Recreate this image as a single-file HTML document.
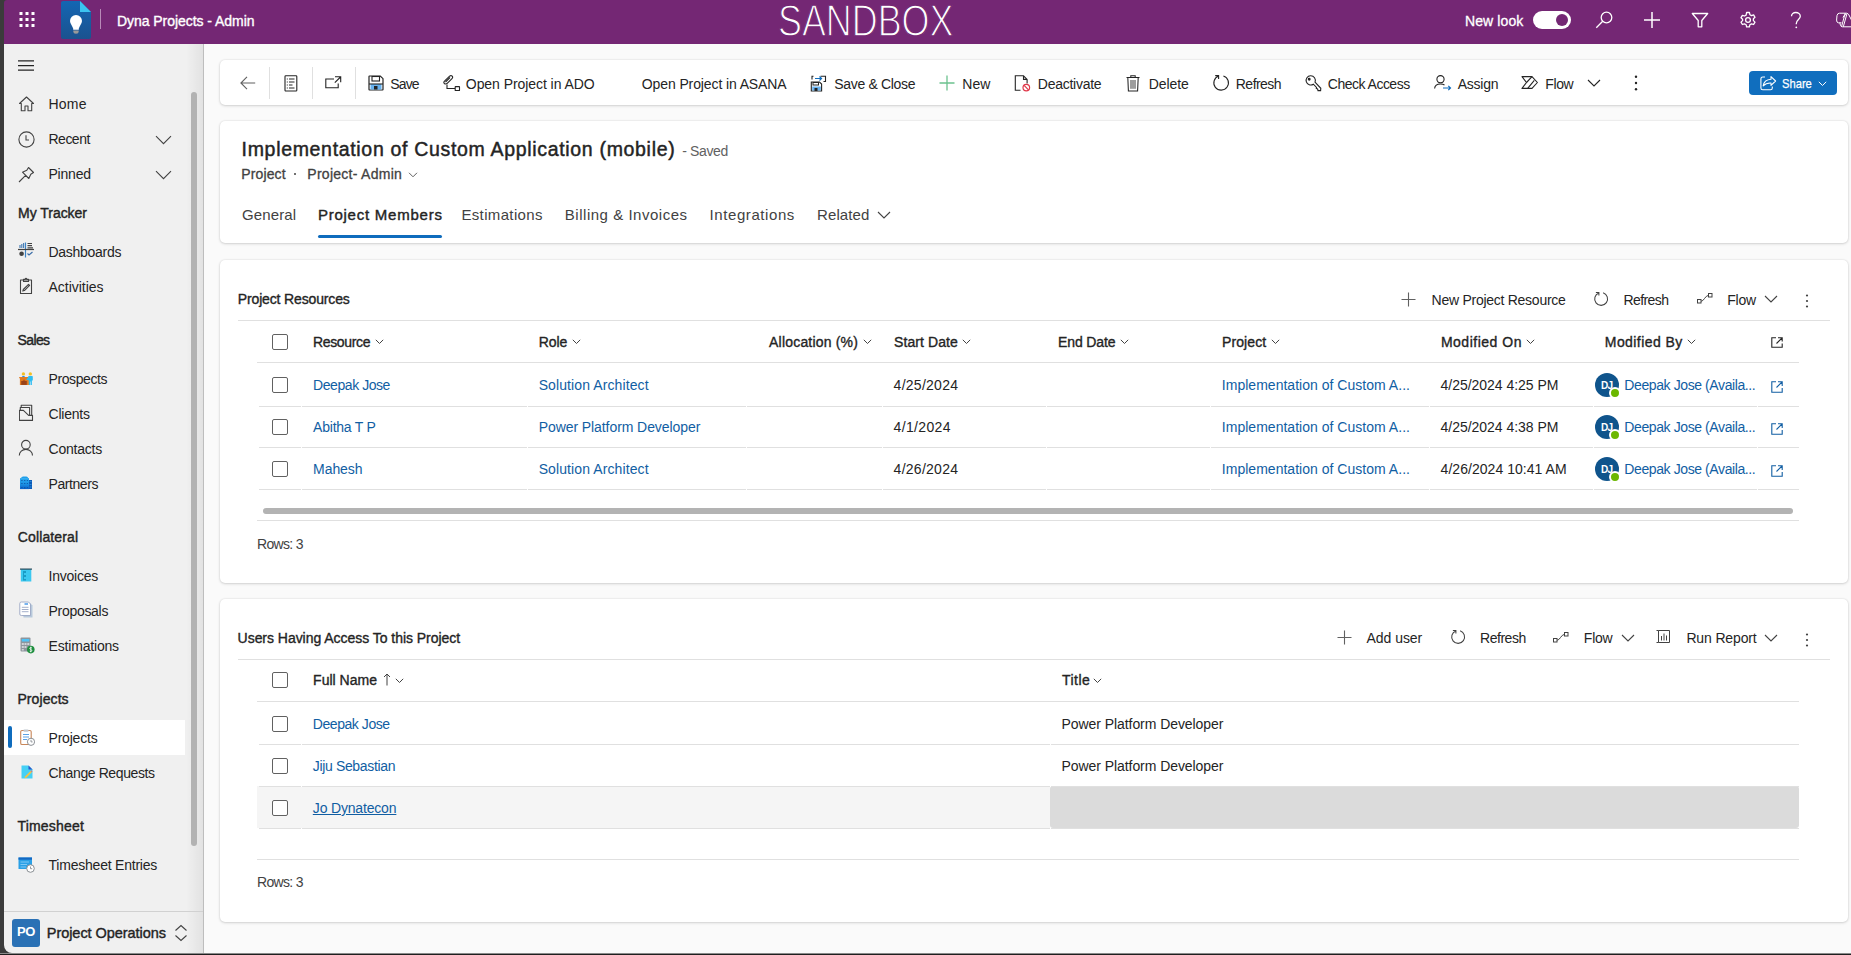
<!DOCTYPE html>
<html><head><meta charset="utf-8">
<style>
*{box-sizing:border-box;margin:0;padding:0}
html,body{width:1851px;height:955px;overflow:hidden}
body{position:relative;background:#fafafa;font-family:"Liberation Sans",sans-serif;color:#242424;font-size:14px}
.a{position:absolute;white-space:nowrap}
#frameL{left:0;top:0;width:4px;height:955px;background:#3b3b3b}
#frameB{left:0;top:953px;width:1851px;height:2px;background:linear-gradient(#8a8a8a 0,#8a8a8a 1px,#1f1f1f 1px)}
#topbar{left:4px;top:0;width:1847px;height:44px;background:#742774;border-top-left-radius:3px}
#nav{left:4px;top:44px;width:200px;height:909px;background:#f0f0f0;border-right:1px solid #bdbdbd;border-bottom-left-radius:8px}
.nv{font-size:14px;line-height:20px;color:#242424;letter-spacing:-0.15px}
.card{position:absolute;background:#fff;border-radius:5px;box-shadow:0 0 2px rgba(0,0,0,.12),0 1px 3px rgba(0,0,0,.14)}
</style></head><body>
<div id="frameL" class="a"></div>
<div class="a" style="left:0;top:0;width:12px;height:12px;background:#3b3b3b"></div>
<div id="topbar" class="a"></div>
<div class="a" style="left:0;top:930px;width:30px;height:25px;background:#3b3b3b"></div>
<div id="nav" class="a"></div>
<div class="a" style="left:186px;top:44px;width:17px;height:909px;background:linear-gradient(90deg,rgba(0,0,0,0),rgba(0,0,0,0.06))"></div>
<div id="frameB" class="a"></div>

<!-- SIDEBAR -->
<svg class="a" style="left:16px;top:56px" width="20" height="20" viewBox="0 0 20 20" stroke="#242424" stroke-width="1.1"><path d="M2 4.9H18M2 9.6H18M2 14.1H18"/></svg>
<div class="a" style="left:4px;top:720px;width:181px;height:35px;background:#fff"></div>
<div class="a" style="left:8px;top:726px;width:4px;height:22px;border-radius:2px;background:#0f6cbd"></div>
<div class="a" style="left:191px;top:92px;width:6px;height:754px;border-radius:3px;background:#b2b2b2"></div>
<div class="a" style="left:4px;top:911px;width:199px;height:1px;background:#d1d1d1"></div>
<div class="a" style="left:12px;top:919px;width:28px;height:28px;border-radius:3px;background:#2a71b5;color:#fff;font-size:13px;font-weight:bold;line-height:25px;text-align:center;letter-spacing:-0.3px">PO</div>
<svg class="a" style="left:173px;top:924px" width="16" height="18" viewBox="0 0 16 18" fill="none" stroke="#424242" stroke-width="1.1"><path d="M2.5 6.5L8 1.5 13.5 6.5M2.5 11.5L8 16.5 13.5 11.5"/></svg>

<!-- SIDEICONS -->
<svg class="a" style="left:18px;top:96px" width="17" height="16" viewBox="0 0 17 16" fill="none" stroke="#424242" stroke-width="1.1" stroke-linejoin="round"><path d="M8.5 1L1.5 7.5H3.3V14.8H7V10H10V14.8H13.7V7.5H15.5Z"/></svg>
<svg class="a" style="left:18px;top:131px" width="17" height="17" viewBox="0 0 17 17" fill="none" stroke="#424242" stroke-width="1.1"><circle cx="8.5" cy="8.5" r="7.6"/><path d="M8 4.3V9H11"/></svg>
<svg class="a" style="left:18px;top:166px" width="17" height="17" viewBox="0 0 17 17" fill="none" stroke="#424242" stroke-width="1.1" stroke-linejoin="round"><path d="M10.5 1.5L15.5 6.5 12.8 8.2 10.8 12.5 4.5 6.2 8.8 4.2Z M7.6 9.4L1 16"/></svg>
<svg class="a" style="left:155px;top:135px" width="17" height="10" viewBox="0 0 17 10" fill="none" stroke="#424242" stroke-width="1.1"><path d="M1 1.2L8.5 8.7 16 1.2"/></svg>
<svg class="a" style="left:155px;top:170px" width="17" height="10" viewBox="0 0 17 10" fill="none" stroke="#424242" stroke-width="1.1"><path d="M1 1.2L8.5 8.7 16 1.2"/></svg>
<svg class="a" style="left:18px;top:242px" width="16" height="16" viewBox="0 0 16 16" fill="none" stroke-width="1.2">
<path d="M7.5 0.5V15.5" stroke="#3d84c6"/><path d="M0 7.5H16" stroke="#424242"/>
<path d="M2 6V3M3.8 6V2M5.6 6V1" stroke="#4a7fb5"/><path d="M9.5 1.5H14M9.5 3.7H14M9.5 5.8H15" stroke="#424242"/>
<path d="M9.5 11.5L11 13 14.5 10" stroke="#3d6fa8"/><circle cx="3.6" cy="11.8" r="2.3" fill="#424242" stroke="none"/></svg>
<svg class="a" style="left:19px;top:277px" width="14" height="18" viewBox="0 0 14 18" fill="none" stroke="#424242" stroke-width="1.1"><path d="M1.5 3H4.5M9.5 3H12.5V16.5H1.5V3Z M4.5 4.5V2.2H6Q7 0.5 8 2.2H9.5V4.5Z M4.3 12.5L9.5 7.3 10.6 8.4 5.4 13.6 3.8 14.1Z" stroke-linejoin="round"/></svg>
<svg class="a" style="left:14px;top:366px" width="26" height="26" viewBox="0 0 26 26">
<circle cx="9.4" cy="7.9" r="1.7" fill="#f4c025"/><circle cx="16.3" cy="7.9" r="1.7" fill="#f4c025"/>
<path d="M7.8 11.3Q8 10 9.4 10T11.2 11.3Z" fill="#1e88e5"/>
<path d="M5.2 10.9H14.9V18.9H5.9V12.2H5.2Z" fill="#e27b1f"/>
<path d="M7.2 15H12.8V18.9H7.2Z" fill="#9a4318"/><path d="M9.3 15V14.2H10.7V15" fill="none" stroke="#9a4318" stroke-width=".6"/>
<path d="M14.4 10.1H18.2Q18.8 10.1 18.8 10.8V14.5H17.9V18.9H16.6V15.5H16.1V18.9H14.8V14.3L13 14 12.3 13.4 14 11.6Z" fill="#2fbdf2"/>
</svg>
<svg class="a" style="left:19px;top:404px" width="15" height="18" viewBox="0 0 15 18" fill="none" stroke="#424242" stroke-width="1.1" stroke-linejoin="round"><path d="M2.2 3.3V1.3H12.7V11.4M1.3 6.4V3.5H10.6V11.4M0.4 16.4V6.4H4.4L9.6 11.4H13.5V16.4Z"/></svg>
<svg class="a" style="left:18px;top:439px" width="16" height="18" viewBox="0 0 16 18" fill="none" stroke="#424242" stroke-width="1.1"><circle cx="7.9" cy="5.7" r="4.3"/><path d="M1.3 16.6A6.6 6.2 0 0 1 14.5 16.6"/></svg>
<svg class="a" style="left:14px;top:470px" width="26" height="26" viewBox="0 0 26 26">
<defs><linearGradient id="bg1" x1="0" y1="0" x2="0" y2="1"><stop offset="0" stop-color="#2aaaf0"/><stop offset=".55" stop-color="#1b90e3"/><stop offset="1" stop-color="#0a5fc8"/></linearGradient></defs>
<path d="M7 8.3Q7.3 6.4 9.2 6.4H12.3Q14 6.4 14.2 8.3Z" fill="#1f9fea"/>
<rect x="6" y="8.1" width="9" height="11" fill="url(#bg1)"/><rect x="15" y="10" width="3" height="9" fill="#0d5ab8"/>
<path d="M15.5 11.5H17.5M15.5 14.5H17.5M15.5 17H17.5" stroke="#2f9be0" stroke-width=".8"/>
<g fill="#0b4f9e" opacity=".75"><rect x="7.2" y="10" width="1.4" height="1"/><rect x="10" y="10" width="1.4" height="1"/><rect x="12.8" y="10" width="1.2" height="1"/><rect x="7.2" y="13" width="1.4" height="1"/><rect x="10" y="13" width="1.4" height="1"/><rect x="12.8" y="13" width="1.2" height="1"/><rect x="7.2" y="17" width="1.4" height="1"/><rect x="10" y="17" width="1.4" height="1.4"/><rect x="12.8" y="17" width="1.2" height="1"/></g>
</svg>
<svg class="a" style="left:20px;top:568px" width="12" height="14" viewBox="0 0 12 14">
<rect x="0.8" y="1" width="10.5" height="12.5" fill="#3cc8f0"/><rect x="0" y="0.5" width="12" height="1.2" fill="#2b4a5a"/>
<path d="M3 3H6V5H4V7H6V9H4V11H6V12.5H3Z" fill="#1a9cc5"/></svg>
<svg class="a" style="left:19px;top:601px" width="14" height="17" viewBox="0 0 14 17">
<path d="M2.5 2.5H11.5L13.5 4.5V16.5H4.5Z" fill="#b8c9db"/><path d="M0.8 2.5Q0.8 1 2.3 1H9.5L11.5 3V14.5H2.3Q0.8 14.5 0.8 13Z" fill="#fff" stroke="#9aa6c4" stroke-width=".9"/>
<path d="M5.5 3H9" stroke="#2e8ae6" stroke-width="1.3"/><path d="M2.8 6.3H9.5M2.8 8.5H9.5M2.8 10.7H9.5" stroke="#9aa6c4" stroke-width=".9"/></svg>
<svg class="a" style="left:20px;top:637px" width="15" height="17" viewBox="0 0 15 17">
<rect x="0.5" y="0.5" width="10" height="14" rx="1" fill="#8e959d"/><rect x="1.8" y="2" width="7.5" height="2.5" fill="#4fc3f7"/>
<g fill="#d0d4d8"><rect x="1.8" y="6" width="2" height="2"/><rect x="4.5" y="6" width="2" height="2"/><rect x="7.3" y="6" width="2" height="2"/><rect x="1.8" y="9" width="2" height="2"/><rect x="4.5" y="9" width="2" height="2"/><rect x="1.8" y="12" width="2" height="1.5"/></g>
<circle cx="10.8" cy="12.6" r="3.8" fill="#1e8e3e"/><path d="M11.9 11.2Q11.4 10.5 10.7 10.6 9.6 10.7 9.8 11.6 10 12.3 10.9 12.5 11.9 12.8 11.8 13.6 11.6 14.6 10.5 14.5 9.8 14.4 9.5 13.9M10.8 9.7V15.3" stroke="#fff" stroke-width=".8" fill="none"/></svg>
<svg class="a" style="left:20px;top:729px" width="15" height="17" viewBox="0 0 15 17">
<rect x="0.7" y="1.5" width="10.5" height="14" rx="1.3" fill="#fff" stroke="#c8875a" stroke-width="1.1"/><rect x="3.5" y="0.5" width="5" height="2.2" rx=".6" fill="#c0c8d0"/>
<path d="M3 5.5H9M3 8H9M3 10.5H7" stroke="#5aa2e6" stroke-width="1.2"/>
<circle cx="11" cy="12.8" r="3.6" fill="#fff" stroke="#8a8f94" stroke-width="1"/><path d="M11 10.9V12.9H12.6" stroke="#8a8f94" stroke-width=".9" fill="none"/></svg>
<svg class="a" style="left:21px;top:765px" width="12" height="14" viewBox="0 0 12 14">
<path d="M0.5 0.5H7.5L11.5 4.5V13.5H0.5Z" fill="#45d0f5"/><path d="M7.5 0.5L11.5 4.5H7.5Z" fill="#2c57c9"/>
<path d="M4 11.5L9.5 6 10.8 7.3 5.3 12.8 3.5 13.3Z" fill="#f5c242"/><path d="M9.5 6L10.8 7.3 11.5 6.6 10.2 5.3Z" fill="#e57373"/></svg>
<svg class="a" style="left:18px;top:857px" width="17" height="16" viewBox="0 0 17 16">
<rect x="0.5" y="0.5" width="13.5" height="11.5" fill="#2aa0e6"/><rect x="0.5" y="0.5" width="13.5" height="2.2" fill="#1467c2"/>
<path d="M2.5 5H11M2.5 7.5H9M2.5 10H8" stroke="#7ec8f5" stroke-width="1"/>
<circle cx="12.5" cy="11.5" r="3.8" fill="#fff" stroke="#8a8f94" stroke-width="1"/><path d="M12.5 9.5V11.7H14.2" stroke="#8a8f94" stroke-width=".9" fill="none"/></svg>
<!-- TOPBAR -->
<svg class="a" style="left:18px;top:11px" width="20" height="20" viewBox="0 0 20 20"><g fill="#fff">
<rect x="1.5" y="1" width="3" height="3"/><rect x="7.5" y="1" width="3" height="3"/><rect x="13.5" y="1" width="3" height="3"/>
<rect x="1.5" y="7" width="3" height="3"/><rect x="7.5" y="7" width="3" height="3"/><rect x="13.5" y="7" width="3" height="3"/>
<rect x="1.5" y="13" width="3" height="3"/><rect x="7.5" y="13" width="3" height="3"/><rect x="13.5" y="13" width="3" height="3"/></g></svg>
<svg class="a" style="left:61px;top:1px" width="30" height="38" viewBox="0 0 30 38">
<defs><linearGradient id="lg" x1="0" y1="0" x2="0" y2="1"><stop offset="0" stop-color="#1366b3"/><stop offset="1" stop-color="#1b528f"/></linearGradient></defs>
<path d="M2 0H19L30 11V36Q30 38 28 38H2Q0 38 0 36V2Q0 0 2 0Z" fill="url(#lg)"/>
<path d="M19 0L30 11H19Z" fill="#3bc3f0"/>
<path d="M15 14a6 6 0 0 0-6 6c0 2.6 2.2 4.4 3.2 7.5v1.2h5.6v-1.2c1-3.1 3.2-4.9 3.2-7.5a6 6 0 0 0-6-6z" fill="#fff"/>
<path d="M12.3 29.5h5.4v1.3q0 2-2.7 2t-2.7-2z" fill="#999"/>
</svg>
<div class="a" style="left:100px;top:9px;width:1px;height:20px;background:#b88ab8"></div>
<div class="a" style="left:117px;top:13px;font-size:14px;color:#fff;-webkit-text-stroke:0.35px #fff;letter-spacing:-0.05px">Dyna Projects - Admin</div>
<div class="a" style="left:778px;top:-4px;font-size:44px;color:#fff;-webkit-text-stroke:1.3px #742774;transform:scaleX(0.815);transform-origin:0 0">SANDBOX</div>
<div class="a" style="left:1465px;top:13px;font-size:14px;color:#fff;-webkit-text-stroke:0.3px #fff;letter-spacing:0.1px">New look</div>
<div class="a" style="left:1533px;top:11px;width:38px;height:18px;border-radius:9px;background:#fff"></div>
<div class="a" style="left:1556px;top:14px;width:12px;height:12px;border-radius:6px;background:#742774"></div>
<svg class="a" style="left:1594px;top:10px" width="20" height="20" viewBox="0 0 20 20" fill="none" stroke="#fff" stroke-width="1.3">
<circle cx="12.5" cy="7.5" r="5.3"/><path d="M8.7 11.3L2.3 17.7"/></svg>
<svg class="a" style="left:1642px;top:10px" width="20" height="20" viewBox="0 0 20 20" fill="none" stroke="#fff" stroke-width="1.5">
<path d="M10 2V18M2 10H18"/></svg>
<svg class="a" style="left:1690px;top:10px" width="20" height="20" viewBox="0 0 20 20" fill="none" stroke="#fff" stroke-width="1.3">
<path d="M2.3 3.5H17.7L11.8 10.5V16.8H8.2V10.5Z" stroke-linejoin="round"/></svg>
<svg class="a" style="left:1738px;top:10px" width="20" height="20" viewBox="0 0 20 20" fill="none" stroke="#fff" stroke-width="1.3">
<path d="M8.6 2.5h2.8l.5 2.2 1.6.9 2.1-.7 1.4 2.4-1.6 1.5v1.8l1.6 1.5-1.4 2.4-2.1-.7-1.6.9-.5 2.2H8.6l-.5-2.2-1.6-.9-2.1.7-1.4-2.4 1.6-1.5V9.2L3 7.7l1.4-2.4 2.1.7 1.6-.9z" stroke-linejoin="round"/><circle cx="10" cy="10" r="2.4"/></svg>
<svg class="a" style="left:1786px;top:10px" width="20" height="20" viewBox="0 0 20 20" fill="none" stroke="#fff" stroke-width="1.3">
<path d="M5.5 6.3C5.5 3.9 7.4 2.5 9.8 2.5S14.3 4 14.3 6.3C14.3 9.3 10.3 9.8 10.3 13.5V14.3"/><circle cx="10.3" cy="17.3" r=".9" fill="#fff" stroke="none"/></svg>
<svg class="a" style="left:1836px;top:12px" width="16" height="16" viewBox="0 0 16 16" fill="none" stroke="#fff" stroke-width="1"><path d="M3.5 1.2H10.5Q12 1.2 12.8 2.8L15.5 8 M9.2 1.2L5.5 14.8 M11 1.5L7.3 14.8 M10 2.5Q8 2.5 7 5.5 M3.5 1.2Q1.5 1.2 1 3.5L0.6 8Q0.5 10.5 2.3 10.8H5.5 M3.8 10.8L4.5 13.5Q5 14.8 6.5 14.8H15"/></svg>



<!-- MAIN -->
<div class="card" style="left:220px;top:60px;width:1628px;height:45px"></div>
<div class="card" style="left:220px;top:121px;width:1628px;height:122px"></div>
<div class="card" style="left:220px;top:260px;width:1628px;height:323px"></div>
<div class="card" style="left:220px;top:599px;width:1628px;height:323px"></div>
<svg class="a" style="left:240px;top:76px" width="16" height="14" viewBox="0 0 16 14" fill="none" stroke="#616161" stroke-width="1.1"><path d="M7 0.8L0.9 7 7 13.2M1 7H15.2"/></svg>
<div class="a" style="left:269px;top:67px;width:1px;height:32px;background:#e0e0e0"></div>
<div class="a" style="left:312px;top:67px;width:1px;height:32px;background:#e0e0e0"></div>
<div class="a" style="left:355px;top:67px;width:1px;height:32px;background:#e0e0e0"></div>
<svg class="a" style="left:284px;top:75px" width="14" height="17" viewBox="0 0 14 17" fill="none" stroke="#242424" stroke-width="1.1"><rect x="1" y="0.8" width="11.8" height="15.2" rx=".8"/><path d="M5 4H10.5M5 7H10.5M5 10H8.5M5 13H10.5" stroke-width="1"/><path d="M2.8 4H3.8M2.8 7H3.8M2.8 10H3.8M2.8 13H3.8" stroke-width="1"/></svg>
<svg class="a" style="left:325px;top:76px" width="17" height="13" viewBox="0 0 17 13" fill="none" stroke="#242424" stroke-width="1.1"><path d="M9 3H0.8V11.8H13.2V7.5M10 0.8H15.7V6.3M15.5 1L9.8 6.7"/></svg>
<svg class="a" style="left:368px;top:75px" width="16" height="16" viewBox="0 0 16 16"><path d="M1.5 1H12.3L15 3.7V14.5Q15 15 14.5 15H1.5Q1 15 1 14.5V1.5Q1 1 1.5 1Z" fill="#fff" stroke="#242424" stroke-width="1.2"/><rect x="2.5" y="9" width="11" height="5.5" fill="#69b3f0"/><rect x="4" y="1.5" width="7.5" height="4.5" fill="#fff" stroke="#242424" stroke-width="1.1"/><rect x="6" y="11" width="3.5" height="3.5" fill="#242424"/><path d="M1 9H15" stroke="#242424" stroke-width="1.1"/></svg>
<svg class="a" style="left:443px;top:75px" width="18" height="16" viewBox="0 0 18 16" fill="none" stroke="#242424" stroke-width="1.1"><path d="M6.6 1.2Q8 0 9.2 1.2 10.2 2.4 9 3.6L4.2 8.4Q3.6 9 2.5 9 1.3 9 0.9 7.8 0.7 6.9 1.5 6.2Z"/><path d="M7 2.5L2.5 7" /><path d="M4 9.5V13.5H12"/><rect x="12.2" y="11.6" width="4.3" height="4" rx=".3"/></svg>
<svg class="a" style="left:810px;top:75px" width="17" height="17" viewBox="0 0 17 17"><path d="M3.5 1.2H2V4.5M10.5 1.2H15.5V6.5H13.5" fill="none" stroke="#242424" stroke-width="1.1"/><path d="M5 3.5H11.5M9.5 1.5L11.5 3.5 9.5 5.5" fill="none" stroke="#0f6cbd" stroke-width="1.2"/><path d="M1.3 7H9.5L11.6 9.1V16H1.3Z" fill="#fff" stroke="#242424" stroke-width="1.1"/><rect x="2.2" y="11.5" width="8.6" height="4" fill="#69b3f0"/><rect x="3" y="7.5" width="5.5" height="2.5" fill="#fff" stroke="#242424" stroke-width="1"/><rect x="4.5" y="13" width="3" height="3" fill="#242424"/></svg>
<svg class="a" style="left:939px;top:75px" width="16" height="16" viewBox="0 0 16 16" fill="none" stroke="#6cc28f" stroke-width="1.3"><path d="M8 0.5V15.5M0.5 8H15.5"/></svg>
<svg class="a" style="left:1014px;top:75px" width="17" height="17" viewBox="0 0 17 17"><path d="M6.5 15.3H1.3V0.8H9.5L13.1 4.4V8.5M9.5 0.8V4.4H13.1" fill="none" stroke="#242424" stroke-width="1.1"/><circle cx="12.3" cy="12.6" r="3.3" fill="#fff" stroke="#e0384a" stroke-width="1.2"/><path d="M10.1 10.4L14.5 14.8" stroke="#e0384a" stroke-width="1.2"/></svg>
<svg class="a" style="left:1126px;top:75px" width="14" height="17" viewBox="0 0 14 17" fill="none" stroke="#242424" stroke-width="1.05"><path d="M0.5 2.5H13.5M4.8 2.5V0.8H9.2V2.5M1.8 2.5L2.4 16H11.6L12.2 2.5"/><path d="M5 5V13.8M7 5V13.8M9 5V13.8" stroke-width="0.9"/></svg>
<svg class="a" style="left:1212px;top:75px" width="18" height="17" viewBox="0 0 18 17" fill="none" stroke="#242424" stroke-width="1.1"><path d="M11.4 0.9A7.3 7.3 0 1 1 6.6 1.0"/><path d="M3.2 0.6H6.6V3.9"/></svg>
<svg class="a" style="left:1305px;top:75px" width="17" height="17" viewBox="0 0 17 17" fill="none" stroke="#242424" stroke-width="1.1"><path d="M5.5 0.8A4.6 4.6 0 1 0 8.3 9.2L11.5 12.4 11.3 13.5 12.6 14 13 15.6 15.6 15.6 15.8 13.3 10 7.2A4.6 4.6 0 0 0 5.5 0.8Z"/><circle cx="4.2" cy="4.2" r=".9" fill="#242424"/></svg>
<svg class="a" style="left:1434px;top:75px" width="18" height="16" viewBox="0 0 18 16"><circle cx="6.5" cy="4.2" r="3.6" fill="none" stroke="#242424" stroke-width="1.1"/><path d="M0.6 13.5Q1 9 6.5 9Q9 9 10.5 10" fill="none" stroke="#242424" stroke-width="1.1"/><path d="M9 13H16.5M14.3 10.8L16.5 13 14.3 15.2" fill="none" stroke="#0f6cbd" stroke-width="1.2"/></svg>
<svg class="a" style="left:1521px;top:76px" width="17" height="13" viewBox="0 0 17 13" fill="none" stroke="#242424" stroke-width="1.1" stroke-linejoin="round"><path d="M1 0.6H11L16.4 6.5 11 12.4H1L5.5 6.5Z"/><path d="M11 0.6L5.5 6.5M13.3 4.4L6.7 12.3"/></svg>
<svg class="a" style="left:1587px;top:79px" width="14" height="8" viewBox="0 0 14 8" fill="none" stroke="#242424" stroke-width="1.1"><path d="M1 1L7 7 13 1"/></svg>
<svg class="a" style="left:1634px;top:75px" width="4" height="16" viewBox="0 0 4 16" fill="#242424"><circle cx="2" cy="1.8" r="1.2"/><circle cx="2" cy="8" r="1.2"/><circle cx="2" cy="14.3" r="1.2"/></svg>
<div class="a" style="left:1749px;top:71px;width:88px;height:24px;border-radius:4px;background:#106ebe"></div>
<svg class="a" style="left:1760px;top:76px" width="17" height="15" viewBox="0 0 17 15" fill="none" stroke="#fff" stroke-width="1.1" stroke-linejoin="round"><path d="M5 1H2.8Q0.9 1 0.9 2.8V12Q0.9 13.8 2.8 13.8H10.5Q12.3 13.8 12.3 12V10.5"/><path d="M11 0.6L15.6 5 11 9.3V7Q6 6.8 3.2 9.8 4 4 11 3.3Z"/></svg>
<svg class="a" style="left:1818px;top:81px" width="9" height="6" viewBox="0 0 9 6" fill="none" stroke="#fff" stroke-width="1"><path d="M0.8 0.8L4.5 4.5 8.2 0.8"/></svg>
<div class="a" style="left:294px;top:173px;width:2px;height:2px;border-radius:1px;background:#424242"></div>
<svg class="a" style="left:408px;top:172px" width="10" height="6" viewBox="0 0 10 6" fill="none" stroke="#616161" stroke-width="1"><path d="M1 0.8L5 4.8 9 0.8"/></svg>
<div class="a" style="left:318px;top:235px;width:124px;height:3px;border-radius:1.5px;background:#0f6cbd"></div>
<svg class="a" style="left:877px;top:211px" width="14" height="8" viewBox="0 0 14 8" fill="none" stroke="#424242" stroke-width="1.1"><path d="M1 1L7 7 13 1"/></svg>
<svg class="a" style="left:1401px;top:292px" width="15" height="15" viewBox="0 0 15 15" fill="none" stroke="#616161" stroke-width="1.1"><path d="M7.5 0.5V14.5M0.5 7.5H14.5"/></svg>
<svg class="a" style="left:1593px;top:292px" width="16" height="15" viewBox="0 0 18 17" fill="none" stroke="#424242" stroke-width="1.2"><path d="M11.4 0.9A7.3 7.3 0 1 1 6.6 1.0"/><path d="M3.2 0.6H6.6V3.9"/></svg>
<svg class="a" style="left:1697px;top:293px" width="16" height="11" viewBox="0 0 16 11" fill="none" stroke="#424242" stroke-width="1"><rect x="0.5" y="6.5" width="3.5" height="3.5"/><rect x="11.5" y="0.5" width="3.5" height="3.5"/><path d="M4 8.3Q6 8 7.5 5.5T11.5 2.3"/></svg>
<svg class="a" style="left:1764px;top:295px" width="14" height="8" viewBox="0 0 14 8" fill="none" stroke="#424242" stroke-width="1.1"><path d="M1 1L7 7 13 1"/></svg>
<svg class="a" style="left:1805px;top:294px" width="4" height="14" viewBox="0 0 4 14" fill="#424242"><circle cx="2" cy="1.5" r="1.1"/><circle cx="2" cy="7" r="1.1"/><circle cx="2" cy="12.5" r="1.1"/></svg>
<div class="a" style="left:238px;top:320px;width:1592px;height:1px;background:#e0e0e0"></div>
<div class="a" style="left:272px;top:334px;width:16px;height:16px;border:1px solid #616161;border-radius:2px;background:#fff"></div>
<svg class="a" style="left:375px;top:339px" width="9" height="6" viewBox="0 0 9 6" fill="none" stroke="#424242" stroke-width="1"><path d="M0.8 0.8L4.5 4.5 8.2 0.8"/></svg>
<svg class="a" style="left:572px;top:339px" width="9" height="6" viewBox="0 0 9 6" fill="none" stroke="#424242" stroke-width="1"><path d="M0.8 0.8L4.5 4.5 8.2 0.8"/></svg>
<svg class="a" style="left:863px;top:339px" width="9" height="6" viewBox="0 0 9 6" fill="none" stroke="#424242" stroke-width="1"><path d="M0.8 0.8L4.5 4.5 8.2 0.8"/></svg>
<svg class="a" style="left:962px;top:339px" width="9" height="6" viewBox="0 0 9 6" fill="none" stroke="#424242" stroke-width="1"><path d="M0.8 0.8L4.5 4.5 8.2 0.8"/></svg>
<svg class="a" style="left:1120px;top:339px" width="9" height="6" viewBox="0 0 9 6" fill="none" stroke="#424242" stroke-width="1"><path d="M0.8 0.8L4.5 4.5 8.2 0.8"/></svg>
<svg class="a" style="left:1271px;top:339px" width="9" height="6" viewBox="0 0 9 6" fill="none" stroke="#424242" stroke-width="1"><path d="M0.8 0.8L4.5 4.5 8.2 0.8"/></svg>
<svg class="a" style="left:1526px;top:339px" width="9" height="6" viewBox="0 0 9 6" fill="none" stroke="#424242" stroke-width="1"><path d="M0.8 0.8L4.5 4.5 8.2 0.8"/></svg>
<svg class="a" style="left:1687px;top:339px" width="9" height="6" viewBox="0 0 9 6" fill="none" stroke="#424242" stroke-width="1"><path d="M0.8 0.8L4.5 4.5 8.2 0.8"/></svg>
<svg class="a" style="left:1771px;top:337px" width="12" height="11" viewBox="0 0 12 11" fill="none" stroke="#242424" stroke-width="1.1"><path d="M5 0.8H0.8V10.2H11.2V6.5M7 0.8H11.2V4.5M11 1L5.5 6.5"/></svg>
<div class="a" style="left:257px;top:362px;width:1542px;height:1px;background:#e0e0e0"></div>
<div class="a" style="left:272px;top:377px;width:16px;height:16px;border:1px solid #616161;border-radius:2px;background:#fff"></div>
<div class="a" style="left:1595px;top:373px;width:24px;height:24px;border-radius:12px;background:#0f548c;color:#fff;font-size:10px;font-weight:bold;line-height:25px;text-align:center;letter-spacing:-0.6px;text-indent:-0.5px">DJ</div>
<div class="a" style="left:1609px;top:387px;width:12px;height:12px;border-radius:6px;background:#6bb700;border:2px solid #fff"></div>
<svg class="a" style="left:1771px;top:381px" width="12" height="12" viewBox="0 0 12 12" fill="none" stroke="#115ea3" stroke-width="1.1"><path d="M5 0.8H0.8V11.2H11.2V7M7 0.8H11.2V5M11 1L5.5 6.5"/></svg>
<div class="a" style="left:259px;top:406px;width:1540px;height:1px;background:#e0e0e0"></div>
<div class="a" style="left:272px;top:419px;width:16px;height:16px;border:1px solid #616161;border-radius:2px;background:#fff"></div>
<div class="a" style="left:1595px;top:415px;width:24px;height:24px;border-radius:12px;background:#0f548c;color:#fff;font-size:10px;font-weight:bold;line-height:25px;text-align:center;letter-spacing:-0.6px;text-indent:-0.5px">DJ</div>
<div class="a" style="left:1609px;top:429px;width:12px;height:12px;border-radius:6px;background:#6bb700;border:2px solid #fff"></div>
<svg class="a" style="left:1771px;top:423px" width="12" height="12" viewBox="0 0 12 12" fill="none" stroke="#115ea3" stroke-width="1.1"><path d="M5 0.8H0.8V11.2H11.2V7M7 0.8H11.2V5M11 1L5.5 6.5"/></svg>
<div class="a" style="left:259px;top:447px;width:1540px;height:1px;background:#e0e0e0"></div>
<div class="a" style="left:272px;top:461px;width:16px;height:16px;border:1px solid #616161;border-radius:2px;background:#fff"></div>
<div class="a" style="left:1595px;top:457px;width:24px;height:24px;border-radius:12px;background:#0f548c;color:#fff;font-size:10px;font-weight:bold;line-height:25px;text-align:center;letter-spacing:-0.6px;text-indent:-0.5px">DJ</div>
<div class="a" style="left:1609px;top:471px;width:12px;height:12px;border-radius:6px;background:#6bb700;border:2px solid #fff"></div>
<svg class="a" style="left:1771px;top:465px" width="12" height="12" viewBox="0 0 12 12" fill="none" stroke="#115ea3" stroke-width="1.1"><path d="M5 0.8H0.8V11.2H11.2V7M7 0.8H11.2V5M11 1L5.5 6.5"/></svg>
<div class="a" style="left:259px;top:489px;width:1540px;height:1px;background:#e0e0e0"></div>
<div class="a" style="left:263px;top:508px;width:1530px;height:6px;border-radius:3px;background:#b3b3b3"></div>
<div class="a" style="left:257px;top:520px;width:1542px;height:1px;background:#e0e0e0"></div>
<svg class="a" style="left:1337px;top:630px" width="15" height="15" viewBox="0 0 15 15" fill="none" stroke="#616161" stroke-width="1.1"><path d="M7.5 0.5V14.5M0.5 7.5H14.5"/></svg>
<svg class="a" style="left:1450px;top:630px" width="16" height="15" viewBox="0 0 18 17" fill="none" stroke="#424242" stroke-width="1.2"><path d="M11.4 0.9A7.3 7.3 0 1 1 6.6 1.0"/><path d="M3.2 0.6H6.6V3.9"/></svg>
<svg class="a" style="left:1553px;top:632px" width="16" height="11" viewBox="0 0 16 11" fill="none" stroke="#424242" stroke-width="1"><rect x="0.5" y="6.5" width="3.5" height="3.5"/><rect x="11.5" y="0.5" width="3.5" height="3.5"/><path d="M4 8.3Q6 8 7.5 5.5T11.5 2.3"/></svg>
<svg class="a" style="left:1621px;top:634px" width="14" height="8" viewBox="0 0 14 8" fill="none" stroke="#424242" stroke-width="1.1"><path d="M1 1L7 7 13 1"/></svg>
<svg class="a" style="left:1656px;top:630px" width="14" height="13" viewBox="0 0 14 13" fill="none" stroke="#424242" stroke-width="1"><path d="M2.5 0.5H13.5V12.5H2.5M0.5 0.5H2.5V12.5H0.5"/><path d="M5.5 10.5V6M8 10.5V3.5M10.5 10.5V5.5"/></svg>
<svg class="a" style="left:1764px;top:634px" width="14" height="8" viewBox="0 0 14 8" fill="none" stroke="#424242" stroke-width="1.1"><path d="M1 1L7 7 13 1"/></svg>
<svg class="a" style="left:1805px;top:633px" width="4" height="14" viewBox="0 0 4 14" fill="#424242"><circle cx="2" cy="1.5" r="1.1"/><circle cx="2" cy="7" r="1.1"/><circle cx="2" cy="12.5" r="1.1"/></svg>
<div class="a" style="left:238px;top:659px;width:1592px;height:1px;background:#e0e0e0"></div>
<div class="a" style="left:272px;top:672px;width:16px;height:16px;border:1px solid #616161;border-radius:2px;background:#fff"></div>
<svg class="a" style="left:383px;top:673px" width="8" height="13" viewBox="0 0 8 13" fill="none" stroke="#424242" stroke-width="1"><path d="M4 12.5V1M1 4L4 1 7 4"/></svg>
<svg class="a" style="left:395px;top:678px" width="9" height="6" viewBox="0 0 9 6" fill="none" stroke="#424242" stroke-width="1"><path d="M0.8 0.8L4.5 4.5 8.2 0.8"/></svg>
<svg class="a" style="left:1093px;top:678px" width="9" height="6" viewBox="0 0 9 6" fill="none" stroke="#424242" stroke-width="1"><path d="M0.8 0.8L4.5 4.5 8.2 0.8"/></svg>
<div class="a" style="left:257px;top:701px;width:1542px;height:1px;background:#e0e0e0"></div>
<div class="a" style="left:257px;top:786px;width:793px;height:42px;background:#f5f5f5"></div>
<div class="a" style="left:1050px;top:786px;width:749px;height:42px;background:#dbdbdb;border-radius:3px"></div>
<div class="a" style="left:272px;top:716px;width:16px;height:16px;border:1px solid #616161;border-radius:2px;background:#fff"></div>
<div class="a" style="left:259px;top:744px;width:1540px;height:1px;background:#e0e0e0"></div>
<div class="a" style="left:272px;top:758px;width:16px;height:16px;border:1px solid #616161;border-radius:2px;background:#fff"></div>
<div class="a" style="left:259px;top:786px;width:1540px;height:1px;background:#e0e0e0"></div>
<div class="a" style="left:272px;top:800px;width:16px;height:16px;border:1px solid #616161;border-radius:2px;background:#fff"></div>
<div class="a" style="left:259px;top:828px;width:1540px;height:1px;background:#e0e0e0"></div>
<div class="a" style="left:257px;top:859px;width:1542px;height:1px;background:#e0e0e0"></div>
<div class="a" style="left:301px;top:406px;width:1px;height:1px;background:#fff"></div>
<div class="a" style="left:527px;top:406px;width:1px;height:1px;background:#fff"></div>
<div class="a" style="left:746px;top:406px;width:1px;height:1px;background:#fff"></div>
<div class="a" style="left:882px;top:406px;width:1px;height:1px;background:#fff"></div>
<div class="a" style="left:1046px;top:406px;width:1px;height:1px;background:#fff"></div>
<div class="a" style="left:1210px;top:406px;width:1px;height:1px;background:#fff"></div>
<div class="a" style="left:1429px;top:406px;width:1px;height:1px;background:#fff"></div>
<div class="a" style="left:1593px;top:406px;width:1px;height:1px;background:#fff"></div>
<div class="a" style="left:1757px;top:406px;width:1px;height:1px;background:#fff"></div>
<div class="a" style="left:301px;top:447px;width:1px;height:1px;background:#fff"></div>
<div class="a" style="left:527px;top:447px;width:1px;height:1px;background:#fff"></div>
<div class="a" style="left:746px;top:447px;width:1px;height:1px;background:#fff"></div>
<div class="a" style="left:882px;top:447px;width:1px;height:1px;background:#fff"></div>
<div class="a" style="left:1046px;top:447px;width:1px;height:1px;background:#fff"></div>
<div class="a" style="left:1210px;top:447px;width:1px;height:1px;background:#fff"></div>
<div class="a" style="left:1429px;top:447px;width:1px;height:1px;background:#fff"></div>
<div class="a" style="left:1593px;top:447px;width:1px;height:1px;background:#fff"></div>
<div class="a" style="left:1757px;top:447px;width:1px;height:1px;background:#fff"></div>
<div class="a" style="left:301px;top:489px;width:1px;height:1px;background:#fff"></div>
<div class="a" style="left:527px;top:489px;width:1px;height:1px;background:#fff"></div>
<div class="a" style="left:746px;top:489px;width:1px;height:1px;background:#fff"></div>
<div class="a" style="left:882px;top:489px;width:1px;height:1px;background:#fff"></div>
<div class="a" style="left:1046px;top:489px;width:1px;height:1px;background:#fff"></div>
<div class="a" style="left:1210px;top:489px;width:1px;height:1px;background:#fff"></div>
<div class="a" style="left:1429px;top:489px;width:1px;height:1px;background:#fff"></div>
<div class="a" style="left:1593px;top:489px;width:1px;height:1px;background:#fff"></div>
<div class="a" style="left:1757px;top:489px;width:1px;height:1px;background:#fff"></div>
<div class="a" style="left:301px;top:744px;width:1px;height:1px;background:#fff"></div>
<div class="a" style="left:1050px;top:744px;width:1px;height:1px;background:#fff"></div>
<div class="a" style="left:301px;top:786px;width:1px;height:1px;background:#fff"></div>
<div class="a" style="left:1050px;top:786px;width:1px;height:1px;background:#fff"></div>
<div class="a" style="left:301px;top:828px;width:1px;height:1px;background:#fff"></div>
<div class="a" style="left:1050px;top:828px;width:1px;height:1px;background:#fff"></div>
<div class="a" style="left:390.30px;top:73.95px;font-size:14px;line-height:20px;color:#242424;letter-spacing:-0.863px;">Save</div>
<div class="a" style="left:465.80px;top:73.95px;font-size:14px;line-height:20px;color:#242424;letter-spacing:-0.061px;">Open Project in ADO</div>
<div class="a" style="left:641.80px;top:73.95px;font-size:14px;line-height:20px;color:#242424;letter-spacing:-0.111px;">Open Project in ASANA</div>
<div class="a" style="left:834.30px;top:73.95px;font-size:14px;line-height:20px;color:#242424;letter-spacing:-0.336px;">Save &amp; Close</div>
<div class="a" style="left:962.30px;top:73.95px;font-size:14px;line-height:20px;color:#242424;letter-spacing:0.057px;">New</div>
<div class="a" style="left:1037.80px;top:73.95px;font-size:14px;line-height:20px;color:#242424;letter-spacing:-0.258px;">Deactivate</div>
<div class="a" style="left:1148.80px;top:73.95px;font-size:14px;line-height:20px;color:#242424;letter-spacing:-0.110px;">Delete</div>
<div class="a" style="left:1235.80px;top:73.95px;font-size:14px;line-height:20px;color:#242424;letter-spacing:-0.533px;">Refresh</div>
<div class="a" style="left:1327.80px;top:73.95px;font-size:14px;line-height:20px;color:#242424;letter-spacing:-0.507px;">Check Access</div>
<div class="a" style="left:1457.80px;top:73.95px;font-size:14px;line-height:20px;color:#242424;letter-spacing:-0.280px;">Assign</div>
<div class="a" style="left:1545.30px;top:73.95px;font-size:14px;line-height:20px;color:#242424;letter-spacing:-0.413px;">Flow</div>
<div class="a" style="left:1782.00px;top:74.20px;font-size:13px;line-height:19px;color:#fff;-webkit-text-stroke:0.25px #fff;transform:scaleX(0.86);transform-origin:0 0;">Share</div>
<div class="a" style="left:241.60px;top:135.04px;font-size:19.5px;line-height:28px;color:#242424;letter-spacing:0.679px;-webkit-text-stroke:0.45px #242424;">Implementation of Custom Application (mobile)</div>
<div class="a" style="left:682.30px;top:141.15px;font-size:14px;line-height:20px;color:#616161;letter-spacing:-0.388px;">- Saved</div>
<div class="a" style="left:241.30px;top:164.05px;font-size:14px;line-height:20px;color:#424242;letter-spacing:0.125px;-webkit-text-stroke:0.3px #424242;">Project</div>
<div class="a" style="left:307.30px;top:164.05px;font-size:14px;line-height:20px;color:#424242;letter-spacing:0.270px;-webkit-text-stroke:0.3px #424242;">Project- Admin</div>
<div class="a" style="left:241.90px;top:203.50px;font-size:15px;line-height:22px;color:#424242;letter-spacing:0.139px;">General</div>
<div class="a" style="left:317.90px;top:203.50px;font-size:15px;line-height:22px;color:#242424;letter-spacing:0.760px;-webkit-text-stroke:0.4px #242424;">Project Members</div>
<div class="a" style="left:461.40px;top:203.50px;font-size:15px;line-height:22px;color:#424242;letter-spacing:0.357px;">Estimations</div>
<div class="a" style="left:564.80px;top:203.50px;font-size:15px;line-height:22px;color:#424242;letter-spacing:0.524px;">Billing &amp; Invoices</div>
<div class="a" style="left:709.60px;top:203.50px;font-size:15px;line-height:22px;color:#424242;letter-spacing:0.574px;">Integrations</div>
<div class="a" style="left:817.10px;top:203.50px;font-size:15px;line-height:22px;color:#424242;letter-spacing:0.083px;">Related</div>
<div class="a" style="left:237.80px;top:288.75px;font-size:14px;line-height:20px;color:#242424;letter-spacing:-0.147px;-webkit-text-stroke:0.35px #242424;">Project Resources</div>
<div class="a" style="left:1431.60px;top:290.35px;font-size:14px;line-height:20px;color:#242424;letter-spacing:-0.266px;">New Project Resource</div>
<div class="a" style="left:1623.40px;top:290.35px;font-size:14px;line-height:20px;color:#242424;letter-spacing:-0.567px;">Refresh</div>
<div class="a" style="left:1727.30px;top:290.35px;font-size:14px;line-height:20px;color:#242424;letter-spacing:-0.280px;">Flow</div>
<div class="a" style="left:313.00px;top:331.95px;font-size:14px;line-height:20px;color:#242424;letter-spacing:-0.357px;-webkit-text-stroke:0.35px #242424;">Resource</div>
<div class="a" style="left:538.70px;top:331.95px;font-size:14px;line-height:20px;color:#242424;letter-spacing:-0.091px;-webkit-text-stroke:0.35px #242424;">Role</div>
<div class="a" style="left:769.10px;top:331.95px;font-size:14px;line-height:20px;color:#242424;letter-spacing:0.189px;-webkit-text-stroke:0.35px #242424;">Allocation (%)</div>
<div class="a" style="left:894.10px;top:331.95px;font-size:14px;line-height:20px;color:#242424;letter-spacing:0.077px;-webkit-text-stroke:0.35px #242424;">Start Date</div>
<div class="a" style="left:1058.00px;top:331.95px;font-size:14px;line-height:20px;color:#242424;letter-spacing:-0.122px;-webkit-text-stroke:0.35px #242424;">End Date</div>
<div class="a" style="left:1222.00px;top:331.95px;font-size:14px;line-height:20px;color:#242424;letter-spacing:0.091px;-webkit-text-stroke:0.35px #242424;">Project</div>
<div class="a" style="left:1440.90px;top:331.95px;font-size:14px;line-height:20px;color:#242424;letter-spacing:0.504px;-webkit-text-stroke:0.35px #242424;">Modified On</div>
<div class="a" style="left:1604.80px;top:331.95px;font-size:14px;line-height:20px;color:#242424;letter-spacing:0.428px;-webkit-text-stroke:0.35px #242424;">Modified By</div>
<div class="a" style="left:313.10px;top:375.25px;font-size:14px;line-height:20px;color:#115ea3;letter-spacing:-0.440px;">Deepak Jose</div>
<div class="a" style="left:538.70px;top:375.25px;font-size:14px;line-height:20px;color:#115ea3;letter-spacing:0.099px;">Solution Architect</div>
<div class="a" style="left:893.60px;top:375.25px;font-size:14px;line-height:20px;color:#242424;letter-spacing:0.267px;">4/25/2024</div>
<div class="a" style="left:1221.80px;top:375.25px;font-size:14px;line-height:20px;color:#115ea3;letter-spacing:0.022px;">Implementation of Custom A...</div>
<div class="a" style="left:1440.60px;top:375.25px;font-size:14px;line-height:20px;color:#242424;letter-spacing:-0.031px;">4/25/2024 4:25 PM</div>
<div class="a" style="left:1624.30px;top:375.25px;font-size:14px;line-height:20px;color:#115ea3;letter-spacing:-0.400px;">Deepak Jose (Availa...</div>
<div class="a" style="left:313.10px;top:417.15px;font-size:14px;line-height:20px;color:#115ea3;letter-spacing:-0.227px;">Abitha T P</div>
<div class="a" style="left:538.70px;top:417.15px;font-size:14px;line-height:20px;color:#115ea3;letter-spacing:-0.077px;">Power Platform Developer</div>
<div class="a" style="left:893.60px;top:417.15px;font-size:14px;line-height:20px;color:#242424;letter-spacing:0.346px;">4/1/2024</div>
<div class="a" style="left:1221.80px;top:417.15px;font-size:14px;line-height:20px;color:#115ea3;letter-spacing:0.022px;">Implementation of Custom A...</div>
<div class="a" style="left:1440.60px;top:417.15px;font-size:14px;line-height:20px;color:#242424;letter-spacing:-0.031px;">4/25/2024 4:38 PM</div>
<div class="a" style="left:1624.30px;top:417.15px;font-size:14px;line-height:20px;color:#115ea3;letter-spacing:-0.400px;">Deepak Jose (Availa...</div>
<div class="a" style="left:313.10px;top:459.05px;font-size:14px;line-height:20px;color:#115ea3;letter-spacing:-0.077px;">Mahesh</div>
<div class="a" style="left:538.70px;top:459.05px;font-size:14px;line-height:20px;color:#115ea3;letter-spacing:0.099px;">Solution Architect</div>
<div class="a" style="left:893.60px;top:459.05px;font-size:14px;line-height:20px;color:#242424;letter-spacing:0.267px;">4/26/2024</div>
<div class="a" style="left:1221.80px;top:459.05px;font-size:14px;line-height:20px;color:#115ea3;letter-spacing:0.022px;">Implementation of Custom A...</div>
<div class="a" style="left:1440.60px;top:459.05px;font-size:14px;line-height:20px;color:#242424;letter-spacing:0.037px;">4/26/2024 10:41 AM</div>
<div class="a" style="left:1624.30px;top:459.05px;font-size:14px;line-height:20px;color:#115ea3;letter-spacing:-0.400px;">Deepak Jose (Availa...</div>
<div class="a" style="left:257.10px;top:534.05px;font-size:14px;line-height:20px;color:#424242;letter-spacing:-0.709px;">Rows: 3</div>
<div class="a" style="left:237.60px;top:627.95px;font-size:14px;line-height:20px;color:#242424;letter-spacing:-0.039px;-webkit-text-stroke:0.35px #242424;">Users Having Access To this Project</div>
<div class="a" style="left:1366.60px;top:628.45px;font-size:14px;line-height:20px;color:#242424;letter-spacing:-0.059px;">Add user</div>
<div class="a" style="left:1480.00px;top:628.45px;font-size:14px;line-height:20px;color:#242424;letter-spacing:-0.467px;">Refresh</div>
<div class="a" style="left:1583.80px;top:628.45px;font-size:14px;line-height:20px;color:#242424;letter-spacing:-0.213px;">Flow</div>
<div class="a" style="left:1686.40px;top:628.45px;font-size:14px;line-height:20px;color:#242424;letter-spacing:-0.141px;">Run Report</div>
<div class="a" style="left:313.10px;top:669.95px;font-size:14px;line-height:20px;color:#242424;letter-spacing:0.016px;-webkit-text-stroke:0.35px #242424;">Full Name</div>
<div class="a" style="left:1062.00px;top:669.95px;font-size:14px;line-height:20px;color:#242424;letter-spacing:0.473px;-webkit-text-stroke:0.35px #242424;">Title</div>
<div class="a" style="left:312.80px;top:713.95px;font-size:14px;line-height:20px;color:#115ea3;letter-spacing:-0.440px;">Deepak Jose</div>
<div class="a" style="left:1061.50px;top:713.95px;font-size:14px;line-height:20px;color:#242424;letter-spacing:-0.064px;">Power Platform Developer</div>
<div class="a" style="left:312.80px;top:756.05px;font-size:14px;line-height:20px;color:#115ea3;letter-spacing:-0.350px;">Jiju Sebastian</div>
<div class="a" style="left:1061.50px;top:756.05px;font-size:14px;line-height:20px;color:#242424;letter-spacing:-0.064px;">Power Platform Developer</div>
<div class="a" style="left:312.80px;top:797.95px;font-size:14px;line-height:20px;color:#115ea3;letter-spacing:-0.171px;text-decoration:underline;">Jo Dynatecon</div>
<div class="a" style="left:257.10px;top:872.15px;font-size:14px;line-height:20px;color:#424242;letter-spacing:-0.709px;">Rows: 3</div>
<div class="a" style="left:48.50px;top:94.25px;font-size:14px;line-height:20px;color:#242424;letter-spacing:0.225px;">Home</div>
<div class="a" style="left:48.50px;top:129.15px;font-size:14px;line-height:20px;color:#242424;letter-spacing:-0.508px;">Recent</div>
<div class="a" style="left:48.50px;top:163.95px;font-size:14px;line-height:20px;color:#242424;letter-spacing:-0.215px;">Pinned</div>
<div class="a" style="left:48.50px;top:241.95px;font-size:14px;line-height:20px;color:#242424;letter-spacing:-0.274px;">Dashboards</div>
<div class="a" style="left:48.50px;top:276.95px;font-size:14px;line-height:20px;color:#242424;letter-spacing:-0.013px;">Activities</div>
<div class="a" style="left:48.50px;top:368.95px;font-size:14px;line-height:20px;color:#242424;letter-spacing:-0.391px;">Prospects</div>
<div class="a" style="left:48.50px;top:403.95px;font-size:14px;line-height:20px;color:#242424;letter-spacing:-0.212px;">Clients</div>
<div class="a" style="left:48.50px;top:438.95px;font-size:14px;line-height:20px;color:#242424;letter-spacing:-0.218px;">Contacts</div>
<div class="a" style="left:48.50px;top:473.95px;font-size:14px;line-height:20px;color:#242424;letter-spacing:-0.427px;">Partners</div>
<div class="a" style="left:48.50px;top:565.95px;font-size:14px;line-height:20px;color:#242424;letter-spacing:-0.234px;">Invoices</div>
<div class="a" style="left:48.50px;top:600.95px;font-size:14px;line-height:20px;color:#242424;letter-spacing:-0.292px;">Proposals</div>
<div class="a" style="left:48.50px;top:635.95px;font-size:14px;line-height:20px;color:#242424;letter-spacing:-0.174px;">Estimations</div>
<div class="a" style="left:48.50px;top:727.95px;font-size:14px;line-height:20px;color:#242424;letter-spacing:-0.193px;">Projects</div>
<div class="a" style="left:48.50px;top:762.95px;font-size:14px;line-height:20px;color:#242424;letter-spacing:-0.397px;">Change Requests</div>
<div class="a" style="left:48.50px;top:854.95px;font-size:14px;line-height:20px;color:#242424;letter-spacing:-0.218px;">Timesheet Entries</div>
<div class="a" style="left:18.10px;top:202.85px;font-size:14px;line-height:20px;color:#242424;letter-spacing:-0.040px;-webkit-text-stroke:0.4px #242424;">My Tracker</div>
<div class="a" style="left:17.50px;top:329.85px;font-size:14px;line-height:20px;color:#242424;letter-spacing:-0.600px;-webkit-text-stroke:0.4px #242424;">Sales</div>
<div class="a" style="left:17.80px;top:526.85px;font-size:14px;line-height:20px;color:#242424;letter-spacing:0.120px;-webkit-text-stroke:0.4px #242424;">Collateral</div>
<div class="a" style="left:17.40px;top:688.85px;font-size:14px;line-height:20px;color:#242424;letter-spacing:0.093px;-webkit-text-stroke:0.4px #242424;">Projects</div>
<div class="a" style="left:17.40px;top:815.85px;font-size:14px;line-height:20px;color:#242424;letter-spacing:0.210px;-webkit-text-stroke:0.4px #242424;">Timesheet</div>
<div class="a" style="left:46.80px;top:923.08px;font-size:14.5px;line-height:21px;color:#242424;letter-spacing:-0.054px;-webkit-text-stroke:0.4px #242424;">Project Operations</div>
</body></html>
